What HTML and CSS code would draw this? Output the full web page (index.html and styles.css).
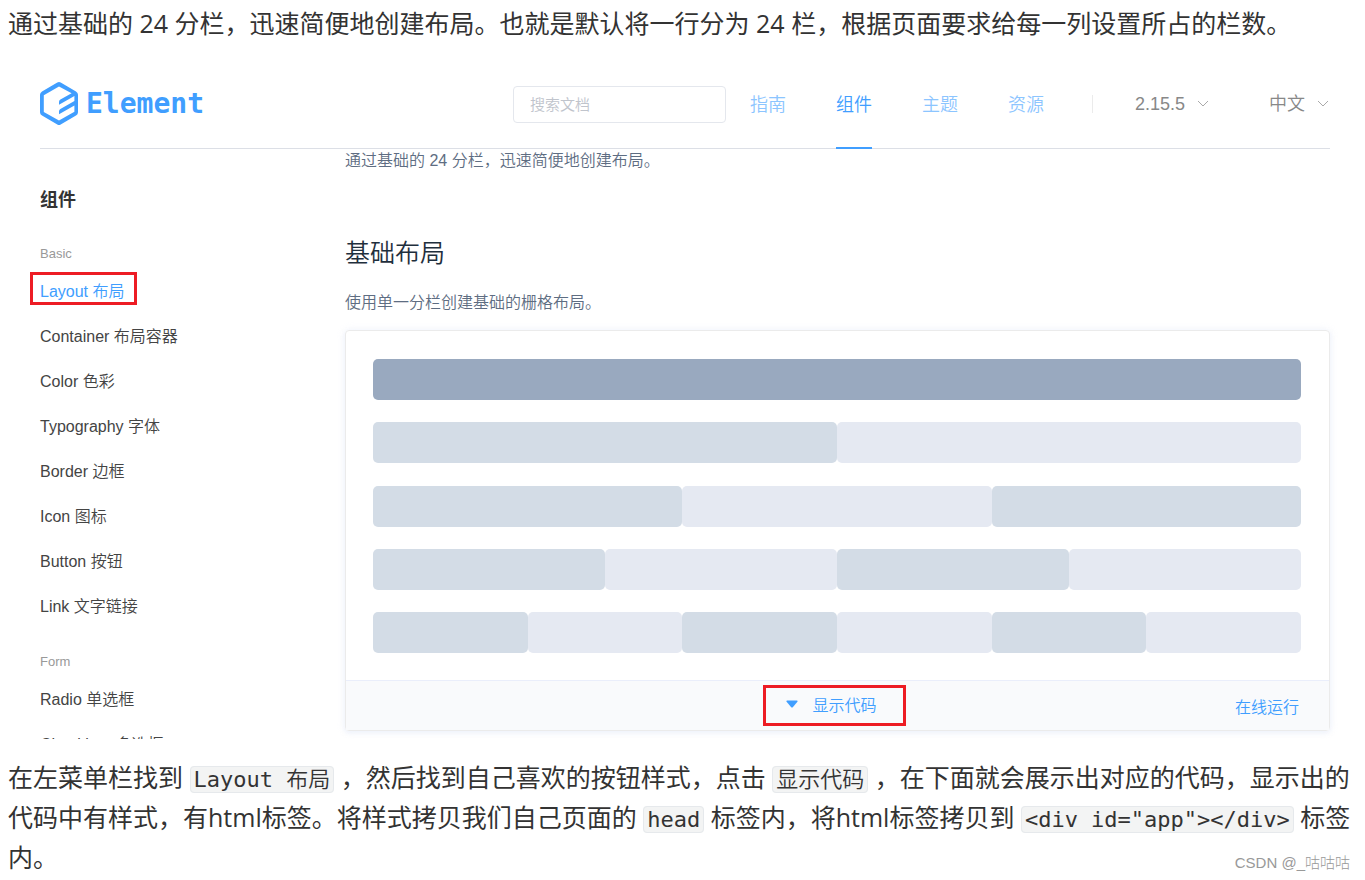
FILE: index.html
```html
<!DOCTYPE html>
<html lang="zh-CN">
<head>
<meta charset="utf-8">
<title>Layout 布局</title>
<link rel="stylesheet" href="styles.css">
</head>
<body>
<article class="article">
  <p class="text">通过基础的 24 分栏，迅速简便地创建布局。也就是默认将一行分为 24 栏，根据页面要求给每一列设置所占的栏数。</p>

  <section class="site">
    <header class="header">
      <a class="logo" href="#">
        <svg class="logo-mark" viewBox="0 0 38 43" aria-hidden="true">
          <path fill="#409eff" fill-rule="evenodd" d="M17.3 .5Q19 -.4 20.7 .5L36 9.4Q38 10.6 38 12.8V30.2Q38 32.4 36 33.6L20.7 42.4Q19 43.4 17.3 42.4L2 33.6Q0 32.4 0 30.2V12.8Q0 10.6 2 9.4ZM19 4.4L3.8 13.2V29.9L19 38.6L34.4 29.8V23.4L19 32.2V29.4Q19 27.8 20.4 27L34.4 19V14L19 22.8V20Q19 18.4 20.4 17.6L31.6 11.2Z"/>
        </svg>
        <span class="logo-name">Element</span>
      </a>
      <input class="search" type="text" placeholder="搜索文档" aria-label="搜索文档">
      <nav class="nav">
        <a class="nav-link" href="#">指南</a>
        <a class="nav-link nav-link-active" href="#">组件</a>
        <a class="nav-link" href="#">主题</a>
        <a class="nav-link" href="#">资源</a>
      </nav>
      <div class="pickers">
        <button class="picker" type="button">2.15.5
          <svg class="chevron" viewBox="0 0 12 8" aria-hidden="true"><path d="M1 1l5 5 5-5"/></svg>
        </button>
        <button class="picker" type="button">中文
          <svg class="chevron" viewBox="0 0 12 8" aria-hidden="true"><path d="M1 1l5 5 5-5"/></svg>
        </button>
      </div>
    </header>

    <div class="columns">
      <aside class="side">
        <h2 class="side-title">组件</h2>
        <h3 class="group">Basic</h3>
        <ul class="menu">
          <li><a class="item item-active marked" href="#">Layout 布局</a></li>
          <li><a class="item" href="#">Container 布局容器</a></li>
          <li><a class="item" href="#">Color 色彩</a></li>
          <li><a class="item" href="#">Typography 字体</a></li>
          <li><a class="item" href="#">Border 边框</a></li>
          <li><a class="item" href="#">Icon 图标</a></li>
          <li><a class="item" href="#">Button 按钮</a></li>
          <li><a class="item" href="#">Link 文字链接</a></li>
        </ul>
        <h3 class="group group-next">Form</h3>
        <ul class="menu">
          <li><a class="item" href="#">Radio 单选框</a></li>
          <li><a class="item" href="#">Checkbox 多选框</a></li>
        </ul>
      </aside>

      <main class="content">
        <p class="note">通过基础的 24 分栏，迅速简便地创建布局。</p>
        <h2 class="title">基础布局</h2>
        <p class="note">使用单一分栏创建基础的栅格布局。</p>
        <div class="demo">
          <div class="rows">
            <div class="row"><i class="col dark"></i></div>
            <div class="row"><i class="col"></i><i class="col light"></i></div>
            <div class="row"><i class="col"></i><i class="col light"></i><i class="col"></i></div>
            <div class="row"><i class="col"></i><i class="col light"></i><i class="col"></i><i class="col light"></i></div>
            <div class="row"><i class="col"></i><i class="col light"></i><i class="col"></i><i class="col light"></i><i class="col"></i><i class="col light"></i></div>
          </div>
          <div class="control">
            <button class="show" type="button">
              <svg class="caret" viewBox="0 0 12 8" aria-hidden="true"><path fill="#409eff" d="M1 .5H11Q12 .8 11.4 1.7L6.8 7.2Q6 8 5.2 7.2L.6 1.7Q0 .8 1 .5Z"/></svg>
              显示代码
            </button>
            <a class="run" href="#">在线运行</a>
          </div>
        </div>
      </main>
    </div>
  </section>

  <p class="text">在左菜单栏找到 <code>Layout 布局</code> ，然后找到自己喜欢的按钮样式，点击 <code>显示代码</code> ，在下面就会展示出对应的代码，显示出的代码中有样式，有html标签。将样式拷贝我们自己页面的 <code>head</code> 标签内，将html标签拷贝到 <code>&lt;div id="app"&gt;&lt;/div&gt;</code> 标签内。</p>
  <span class="watermark">CSDN @_咕咕咕</span>
</article>
</body>
</html>
```
FILE: styles.css
```css
* {
  box-sizing: border-box;
}

body {
  margin: 0;
  background: #fff;
  color: #333;
  font-family: "Liberation Sans", "Noto Sans CJK SC", sans-serif;
}

a {
  text-decoration: none;
}

button {
  padding: 0;
  border: 0;
  background: none;
  font-family: inherit;
  font-weight: inherit;
  cursor: pointer;
}

h2,
h3,
p,
ul {
  margin: 0;
  padding: 0;
}

ul {
  list-style: none;
}

.article {
  position: relative;
  padding: 3px 8px 0;
}

.text {
  font-family: "Open Sans", "Noto Sans CJK SC", sans-serif;
  font-size: 25px;
  line-height: 40px;
}

code {
  padding: 0 3px;
  border: 1px solid #e6e9ec;
  border-radius: 4px;
  background: #f3f4f4;
  font-family: "DejaVu Sans Mono", "Noto Sans CJK SC", monospace;
  font-size: 22px;
  font-weight: 350;
  line-height: 24px;
}

/* Documentation page */
.site {
  height: 680px;
  margin: 16px 0 18px;
  padding: 0 27px 0 32px;
  overflow: hidden;
  font-weight: 350;
}

.header {
  display: flex;
  align-items: center;
  height: 90px;
  border-bottom: 1px solid #dcdfe6;
}

.logo {
  display: flex;
  align-items: center;
  gap: 8px;
  margin-right: auto;
  color: #409eff;
}

.logo-mark {
  width: 38px;
  height: 43px;
}

.logo-name {
  font: bold 28px/40px "DejaVu Sans Mono", monospace;
}

.search {
  width: 213px;
  height: 37px;
  margin-top: 2px;
  padding: 0 16px;
  border: 1px solid #e4e7ed;
  border-radius: 4px;
  font-family: inherit;
  font-size: 15px;
  font-weight: inherit;
  outline: 0;
}

.search::placeholder {
  color: #c0c4cc;
}

.nav {
  display: flex;
  align-self: stretch;
  gap: 50px;
  margin-left: 24px;
}

.nav-link {
  display: flex;
  align-items: center;
  margin-bottom: -1px;
  border-bottom: 2px solid transparent;
  color: #8cc5ff;
  font-size: 18px;
}

.nav-link-active {
  border-color: #409eff;
  color: #409eff;
}

.pickers {
  display: flex;
  gap: 60px;
  margin-left: 48px;
  padding: 0 1px 0 42px;
  border-left: 1px solid #ebebeb;
}

.picker {
  display: flex;
  align-items: center;
  gap: 12px;
  color: #888;
  font-size: 18px;
  line-height: 18px;
}

.chevron {
  width: 12px;
  height: 8px;
  fill: none;
  stroke: #aaa;
}

.columns {
  display: flex;
}

.side {
  flex: none;
  width: 305px;
  padding-top: 35px;
}

.side-title {
  font-size: 18px;
  line-height: 32px;
}

.group {
  margin-top: 28px;
  color: #999;
  font-size: 13px;
  font-weight: inherit;
  line-height: 20px;
}

.menu {
  padding-top: 5px;
}

.group-next {
  margin-top: 23px;
}

.item {
  display: inline-block;
  position: relative;
  color: #444;
  font-size: 16px;
  line-height: 45px;
  vertical-align: top;
}

.item-active {
  color: #409eff;
}

.marked::before {
  content: "";
  position: absolute;
  inset: 3px -12px 9px -10px;
  border: 3px solid #ed1c24;
}

.content {
  flex: 1;
}

.note {
  color: #5e6d82;
  font-size: 16px;
  line-height: 24px;
}

.title {
  margin: 60px 0 16px;
  color: #1f2f3d;
  font-size: 25px;
  font-weight: inherit;
  line-height: 40px;
}

.title + .note {
  line-height: 28px;
}

.demo {
  margin-top: 13px;
  border: 1px solid #ebebeb;
  border-radius: 4px;
  box-shadow: 0 0 8px rgba(232, 237, 250, .6), 0 2px 4px rgba(232, 237, 250, .5);
}

.rows {
  display: grid;
  align-content: space-between;
  min-height: 349px;
  padding: 28px 28px 27px 27px;
}

.row {
  display: flex;
}

.col {
  flex: 1;
  height: 41px;
  border-radius: 5px;
  background: #d3dce6;
}

.light {
  background: #e5e9f2;
}

.dark {
  background: #99a9bf;
}

.control {
  display: grid;
  grid-template-columns: 1fr 143px 1fr;
  align-items: center;
  height: 50px;
  padding-right: 6px;
  border-top: 1px solid #eaeefb;
  background: #f9fafc;
}

.show {
  grid-column: 2;
  display: flex;
  align-items: center;
  justify-content: center;
  gap: 14px;
  height: 41px;
  padding: 0 6px 3px 0;
  border: 3px solid #ed1c24;
  color: #409eff;
  font-size: 16px;
}

.caret {
  width: 12px;
  height: 8px;
}

.run {
  justify-self: end;
  padding-right: 24px;
  color: #409eff;
  font-size: 16px;
}

.watermark {
  position: absolute;
  right: 15px;
  bottom: 2px;
  color: #999;
  font-size: 15px;
  font-weight: 300;
  line-height: 24px;
}
```
